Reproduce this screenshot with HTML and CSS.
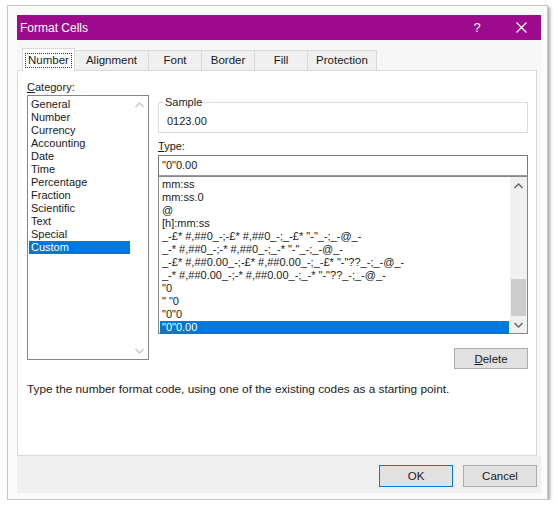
FILE: index.html
```html
<!DOCTYPE html>
<html lang="en">
<head>
    <meta charset="UTF-8">
    <meta name="viewport" content="width=device-width, initial-scale=1.0">
    <title>Format Cells</title>
    <link rel="stylesheet" href="styles.css">
</head>
<body>
    <div class="frame">
        <div class="dialog">
            <!-- Title bar -->
            <div class="titlebar">
                <span class="title">Format Cells</span>
                <span class="help">?</span>
                <span class="close">
                    <svg width="11" height="11" viewBox="0 0 11 11">
                        <path d="M0.5 0.5 L10.5 10.5 M10.5 0.5 L0.5 10.5" stroke="#fff" stroke-width="1.3" fill="none"/>
                    </svg>
                </span>
            </div>

            <!-- Tabs -->
            <div class="tabs">
                <div class="tab active"><span class="focus">Number</span></div>
                <div class="tab tab-align">Alignment</div>
                <div class="tab tab-small">Font</div>
                <div class="tab tab-small">Border</div>
                <div class="tab tab-small">Fill</div>
                <div class="tab tab-prot">Protection</div>
            </div>

            <!-- Number tab page -->
            <div class="panel">
                <div class="columns">
                    <div class="col-left">
                        <div class="label"><u>C</u>ategory:</div>
                        <div class="listbox category">
                            <ul class="items">
                                <li>General</li>
                                <li>Number</li>
                                <li>Currency</li>
                                <li>Accounting</li>
                                <li>Date</li>
                                <li>Time</li>
                                <li>Percentage</li>
                                <li>Fraction</li>
                                <li>Scientific</li>
                                <li>Text</li>
                                <li>Special</li>
                                <li class="selected">Custom</li>
                            </ul>
                            <div class="vscroll disabled">
                                <div class="arrow">
                                    <svg width="9" height="6" viewBox="0 0 9 6"><path d="M0.5 5 L4.5 1 L8.5 5" stroke="#c4c4c4" stroke-width="1.2" fill="none"/></svg>
                                </div>
                                <div class="track"></div>
                                <div class="arrow">
                                    <svg width="9" height="6" viewBox="0 0 9 6"><path d="M0.5 1 L4.5 5 L8.5 1" stroke="#c4c4c4" stroke-width="1.2" fill="none"/></svg>
                                </div>
                            </div>
                        </div>
                    </div>

                    <div class="col-right">
                        <fieldset class="sample">
                            <legend>Sample</legend>
                            <div class="sample-value">0123.00</div>
                        </fieldset>
                        <div class="label type-label"><u>T</u>ype:</div>
                        <div class="textbox">"0"0.00</div>
                        <div class="listbox types">
                            <ul class="items">
                                <li>mm:ss</li>
                                <li>mm:ss.0</li>
                                <li>@</li>
                                <li>[h]:mm:ss</li>
                                <li>_-£* #,##0_-;-£* #,##0_-;_-£* "-"_-;_-@_-</li>
                                <li>_-* #,##0_-;-* #,##0_-;_-* "-"_-;_-@_-</li>
                                <li>_-£* #,##0.00_-;-£* #,##0.00_-;_-£* "-"??_-;_-@_-</li>
                                <li>_-* #,##0.00_-;-* #,##0.00_-;_-* "-"??_-;_-@_-</li>
                                <li>"0</li>
                                <li>" "0</li>
                                <li>"0"0</li>
                                <li class="selected">"0"0.00</li>
                            </ul>
                            <div class="vscroll">
                                <div class="arrow">
                                    <svg width="9" height="6" viewBox="0 0 9 6"><path d="M0.5 5 L4.5 1 L8.5 5" stroke="#606060" stroke-width="1.3" fill="none"/></svg>
                                </div>
                                <div class="track"><div class="thumb"></div></div>
                                <div class="arrow">
                                    <svg width="9" height="6" viewBox="0 0 9 6"><path d="M0.5 1 L4.5 5 L8.5 1" stroke="#606060" stroke-width="1.3" fill="none"/></svg>
                                </div>
                            </div>
                        </div>
                        <div class="btn-row">
                            <button class="btn"><u>D</u>elete</button>
                        </div>
                    </div>
                </div>
                <p class="hint">Type the number format code, using one of the existing codes as a starting point.</p>
            </div>

            <!-- OK / Cancel -->
            <div class="footer">
                <button class="btn ok">OK</button>
                <button class="btn">Cancel</button>
            </div>
        </div>
    </div>
</body>
</html>
```

FILE: styles.css
```css
body {
    margin: 0;
    padding: 5px 0 0 7px;
    background-color: #fff;
    font-family: "Liberation Sans", Arial, sans-serif;
    font-size: 11px;
    color: #1a1a1a;
}
.frame {
    width: 524px;
    height: 478px;
    padding: 9px 6px 6px 9px;
    border: 1px solid #c6c6c6;
    background-color: #fbfbfb;
    box-shadow: 2px 2px 3px rgba(0, 0, 0, 0.35);
}
.dialog {
    width: 524px;
    height: 478px;
    display: flex;
    flex-direction: column;
    background-color: #f7f7f7;
}

/* title bar */
.titlebar {
    height: 25px;
    flex: none;
    display: flex;
    align-items: center;
    background-color: #9e0a8e;
    color: #fff;
    padding-left: 3px;
}
.title {
    font-size: 12px;
    flex: 1;
}
.help {
    font-size: 13px;
    width: 14px;
    text-align: center;
    margin-right: 32px;
}
.close {
    display: flex;
    width: 11px;
    margin-right: 14px;
}

/* tabs */
.tabs {
    height: 30px;
    flex: none;
    display: flex;
    align-items: flex-end;
    padding-left: 5px;
    position: relative;
    z-index: 1;
}
.tab {
    box-sizing: border-box;
    height: 20px;
    width: 54px;
    margin-left: -1px;
    border: 1px solid #d9d9d9;
    border-bottom: none;
    background-color: #f0f0f0;
    text-align: center;
    line-height: 19px;
    font-size: 11.5px;
}
.tab-align {
    width: 75px;
}
.tab-prot {
    width: 70px;
}
.tab.active {
    width: 53px;
    height: 23px;
    margin-left: 0;
    margin-bottom: -1px;
    background-color: #fff;
    display: flex;
    align-items: center;
    justify-content: center;
}
.focus {
    border: 1px dotted #333;
    padding: 0 2px;
    line-height: 13px;
}

/* tab page */
.panel {
    box-sizing: border-box;
    width: 520px;
    height: 386px;
    flex: none;
    border: 1px solid #d9d9d9;
    background-color: #fff;
    padding: 8px 8px 0 9px;
}
.columns {
    display: grid;
    grid-template-columns: 122px 370px;
    column-gap: 9px;
}
.label {
    line-height: 16px;
    height: 16px;
}
.listbox {
    box-sizing: border-box;
    border: 1px solid #868686;
    display: flex;
    background-color: #fff;
}
.category {
    height: 265px;
}
.items {
    list-style: none;
    margin: 0;
    padding: 2px 0 0 0;
    flex: 1;
    min-width: 0;
}
.items li {
    height: 13px;
    line-height: 13px;
    padding-left: 2px;
    margin: 0 1px;
    white-space: nowrap;
    overflow: hidden;
}
.items li.selected {
    background-color: #0078d7;
    color: #fff;
}
.vscroll {
    width: 17px;
    flex: none;
    display: flex;
    flex-direction: column;
    background-color: #f0f0f0;
}
.vscroll.disabled {
    background-color: #fff;
}
.arrow {
    height: 17px;
    display: flex;
    align-items: center;
    justify-content: center;
}
.track {
    flex: 1;
    display: flex;
    flex-direction: column;
    justify-content: flex-end;
}
.thumb {
    height: 37px;
    margin: 0 1px;
    background-color: #cdcdcd;
}

/* right column */
.col-right {
    padding-top: 16px;
}
.sample {
    margin: 0;
    padding: 6px 0 4px 8px;
    border: 1px solid #dcdcdc;
}
.sample legend {
    padding: 0 1px;
    margin-left: -3px;
    line-height: 14px;
}
.sample-value {
    line-height: 13px;
}
.type-label {
    margin-top: 6px;
    line-height: 14px;
    height: 14px;
}
.textbox {
    box-sizing: border-box;
    margin-top: 2px;
    height: 21px;
    border: 1px solid #7a7a7a;
    border-bottom-color: #9a9a9a;
    padding-left: 3px;
    line-height: 19px;
}
.types {
    height: 158px;
}
.types .items {
    padding-top: 1px;
}
.btn-row {
    display: flex;
    justify-content: flex-end;
    margin-top: 14px;
}
.btn {
    box-sizing: border-box;
    width: 74px;
    height: 21px;
    border: 1px solid #adadad;
    background-color: #e1e1e1;
    font-family: inherit;
    font-size: 11.5px;
    color: #1a1a1a;
    padding: 0;
}
.hint {
    margin: 13px 0 0 0;
    line-height: 14px;
    font-size: 11.8px;
}

/* bottom buttons */
.footer {
    flex: 1;
    display: flex;
    justify-content: flex-end;
    gap: 10px;
    padding: 9px 4px 0 0;
    background-color: #f0f0f0;
}
.footer .btn {
    height: 22px;
}
.btn.ok {
    border-color: #0078d7;
}
```
